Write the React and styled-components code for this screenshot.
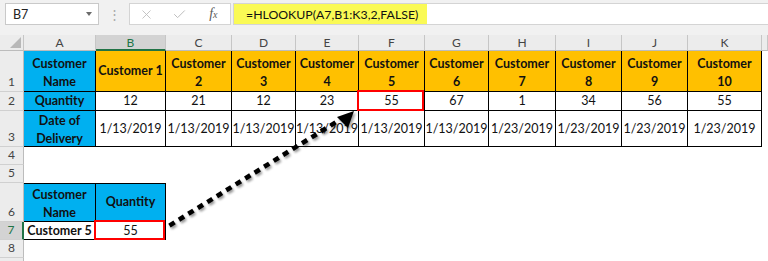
import React from 'react';
import styled, { createGlobalStyle, css } from 'styled-components';
import { X, Check } from 'lucide-react';

const GlobalStyle = createGlobalStyle`
  html, body {
    margin: 0;
    padding: 0;
    background: #fff;
    overflow: hidden;
  }
  body {
    font-family: Lato, "Open Sans", sans-serif;
  }
`;

const COLS = [
  { id: 'A', w: 72 },
  { id: 'B', w: 70 },
  { id: 'C', w: 66 },
  { id: 'D', w: 64 },
  { id: 'E', w: 63 },
  { id: 'F', w: 66 },
  { id: 'G', w: 64 },
  { id: 'H', w: 67 },
  { id: 'I', w: 66 },
  { id: 'J', w: 66 },
  { id: 'K', w: 74 },
];

const ROW_HEIGHTS = [41, 19, 36, 18, 18, 39, 18, 18, 18];

const FILLS = {
  blue: '#00b0f0',
  orange: '#ffc000',
  white: '#fff',
};

const head = (t) => ({ t, fill: 'blue', bold: true, box: true });
const box = (t, extra = {}) => ({ t, box: true, ...extra });

const qty = [12, 21, 12, 23, 55, 67, 1, 34, 56, 55];
const dates = ['1/13/2019', '1/13/2019', '1/13/2019', '1/13/2019', '1/13/2019', '1/13/2019', '1/23/2019', '1/23/2019', '1/23/2019', '1/23/2019'];

// sheet content, row by row (columns A..K)
const DATA = {
  1: [
    head('Customer\nName'),
    { t: 'Customer 1', fill: 'orange', bold: true, box: true },
    ...Array.from({ length: 9 }, (_, i) => ({ t: `Customer\n${i + 2}`, fill: 'orange', bold: true, box: true })),
  ],
  2: [head('Quantity'), ...qty.map((q, i) => box(String(q), { mark: i === 4 }))],
  3: [head('Date of\nDelivery'), ...dates.map((d) => box(d))],
  6: [
    { ...head('Customer\nName'), top: true },
    { ...head('Quantity'), top: true },
  ],
  7: [box('Customer 5', { bold: true }), box('55', { mark: true })],
};

const App = () => {
  return (
    <Page>
      <GlobalStyle />
      {/* formula bar */}
      <Toolbar>
        <NameBox>
          B7
          <Caret />
        </NameBox>
        <Grip>⋮</Grip>
        <FxBox>
          <IconSlot><X size={15} strokeWidth={1.4} color="#bdbdbd" /></IconSlot>
          <IconSlot><Check size={15} strokeWidth={1.6} color="#bdbdbd" /></IconSlot>
          <IconSlot><Fx>f<small>x</small></Fx></IconSlot>
        </FxBox>
        <FormulaInput>
          <Formula>=HLOOKUP(A7,B1:K3,2,FALSE)</Formula>
        </FormulaInput>
      </Toolbar>

      {/* sheet */}
      <Sheet>
        <Corner />
        {COLS.map((c) => (
          <ColHead key={c.id} $active={c.id === 'B'}>{c.id}</ColHead>
        ))}
        <ColHead />
        {ROW_HEIGHTS.map((_, r) => {
          const n = r + 1;
          const cells = DATA[n] || [];
          return (
            <React.Fragment key={n}>
              {/* last row is only a sliver at the window edge */}
              <RowHead $active={n === 7}>{n < 9 ? n : ''}</RowHead>
              {COLS.map((c, i) => {
                const cell = cells[i] || {};
                return (
                  <Cell
                    key={c.id}
                    $fill={cell.fill}
                    $bold={cell.bold}
                    $box={cell.box}
                    $top={cell.top}
                    $mark={cell.mark}
                    $two={cell.t && cell.t.includes('\n')}
                  >
                    {cell.t}
                  </Cell>
                );
              })}
              <Cell />
            </React.Fragment>
          );
        })}
        <Arrow />
      </Sheet>
    </Page>
  );
};

// dotted pointer from B7 up to F2
const Arrow = () => {
  const S = { x: 172, y: 189 };
  const E = { x: 333, y: 89 };
  const n = 18;
  const ang = (Math.atan2(E.y - S.y, E.x - S.x) * 180) / Math.PI;
  const dots = Array.from({ length: n }, (_, i) => {
    const t = i / (n - 1);
    return { x: S.x + (E.x - S.x) * t, y: S.y + (E.y - S.y) * t };
  });
  return (
    <Overlay width="768" height="226" viewBox="0 0 768 226">
      <defs>
        <filter id="sh" x="-20%" y="-20%" width="140%" height="140%">
          <feDropShadow dx="1.5" dy="2" stdDeviation="1.2" floodColor="#000" floodOpacity="0.4" />
        </filter>
      </defs>
      <g filter="url(#sh)" fill="#000">
        {dots.map((d, i) => (
          <rect
            key={i}
            x="-3"
            y="-2.3"
            width="6"
            height="4.6"
            transform={`translate(${d.x.toFixed(1)} ${d.y.toFixed(1)}) rotate(${ang.toFixed(1)})`}
          />
        ))}
        <polygon points="354,76 337,82 348,93" />
      </g>
    </Overlay>
  );
};

export default App;

const Page = styled.div`
  width: 768px;
  height: 261px;
  overflow: hidden;
  background: #fff;
`;

// toolbar
const Toolbar = styled.div`
  height: 35px;
  box-sizing: border-box;
  padding: 3px 0 10px 5px;
  background: #f1f1f1;
  display: flex;
`;

const NameBox = styled.div`
  width: 94px;
  box-sizing: border-box;
  border: 1px solid #c9c9c9;
  background: #fff;
  display: flex;
  align-items: center;
  justify-content: space-between;
  padding: 0 6px 0 7px;
  font-size: 12.5px;
  color: #222;
`;

const Caret = styled.span`
  width: 0;
  height: 0;
  border-left: 3.5px solid transparent;
  border-right: 3.5px solid transparent;
  border-top: 4px solid #6b6b6b;
`;

const Grip = styled.div`
  width: 30px;
  display: flex;
  align-items: center;
  justify-content: center;
  color: #a8a8a8;
  font-size: 13px;
`;

const FxBox = styled.div`
  width: 102px;
  box-sizing: border-box;
  border: 1px solid #d4d4d4;
  background: #fff;
  display: flex;
`;

const IconSlot = styled.div`
  flex: 1;
  display: flex;
  align-items: center;
  justify-content: center;
`;

const Fx = styled.span`
  font-family: "Liberation Serif", serif;
  font-style: italic;
  font-size: 14px;
  color: #5a5a5a;
  small {
    font-size: 10px;
  }
`;

const FormulaInput = styled.div`
  flex: 1;
  margin-left: 2px;
  border: 1px solid #d4d4d4;
  border-right: none;
  background: #fff;
  display: flex;
`;

const Formula = styled.span`
  display: flex;
  align-items: center;
  background: #fafa55;
  padding: 0 9px 0 12px;
  font-size: 12.3px;
  color: #111;
`;

// sheet
const Sheet = styled.div`
  position: relative;
  display: grid;
  grid-template-columns: 24px ${COLS.map((c) => `${c.w}px`).join(' ')} 1fr;
  grid-template-rows: 16px ${ROW_HEIGHTS.map((h) => `${h}px`).join(' ')};
  font-size: 12.5px;
`;

const Corner = styled.div`
  position: relative;
  background: #ececec;
  border-right: 1px solid #c6c6c6;
  border-bottom: 1px solid #bcbcbc;
  box-sizing: border-box;
  &::after {
    content: '';
    position: absolute;
    right: 2px;
    bottom: 2px;
    border-left: 11px solid transparent;
    border-bottom: 11px solid #b8b8b8;
  }
`;

const ColHead = styled.div`
  box-sizing: border-box;
  display: flex;
  align-items: center;
  justify-content: center;
  background: ${(p) => (p.$active ? '#d3d3d3' : '#ececec')};
  color: ${(p) => (p.$active ? '#217346' : '#444')};
  border-right: 1px solid #c6c6c6;
  border-bottom: ${(p) => (p.$active ? '2px solid #217346' : '1px solid #bcbcbc')};
  font-size: 12px;
`;

const RowHead = styled.div`
  box-sizing: border-box;
  display: flex;
  align-items: flex-end;
  justify-content: center;
  padding-bottom: 1px;
  line-height: 16px;
  background: ${(p) => (p.$active ? '#d3d3d3' : '#ececec')};
  color: ${(p) => (p.$active ? '#217346' : '#444')};
  border-right: ${(p) => (p.$active ? '2px solid #217346' : '1px solid #bcbcbc')};
  border-bottom: 1px solid #d0d0d0;
  font-size: 12px;
`;

const Cell = styled.div`
  position: relative;
  box-sizing: border-box;
  display: flex;
  align-items: center;
  justify-content: center;
  text-align: center;
  white-space: pre;
  line-height: 18px;
  padding-top: ${(p) => (p.$two ? '3px' : '0')};
  color: #111;
  font-weight: ${(p) => (p.$bold ? 700 : 400)};
  background: ${(p) => FILLS[p.$fill] || '#fff'};
  border-right: 1px solid ${(p) => (p.$box ? '#000' : 'transparent')};
  border-bottom: 1px solid ${(p) => (p.$box ? '#000' : 'transparent')};
  ${(p) => p.$top && css`
    box-shadow: inset 0 1px 0 #000;
  `}
  ${(p) => p.$mark && css`
    z-index: 1;
    &::after {
      content: '';
      position: absolute;
      top: -2px;
      left: -2px;
      right: 0;
      bottom: -1px;
      border: 2px solid #ff0000;
    }
  `}
`;

const Overlay = styled.svg`
  position: absolute;
  top: 0;
  left: 0;
  z-index: 3;
  pointer-events: none;
`;
